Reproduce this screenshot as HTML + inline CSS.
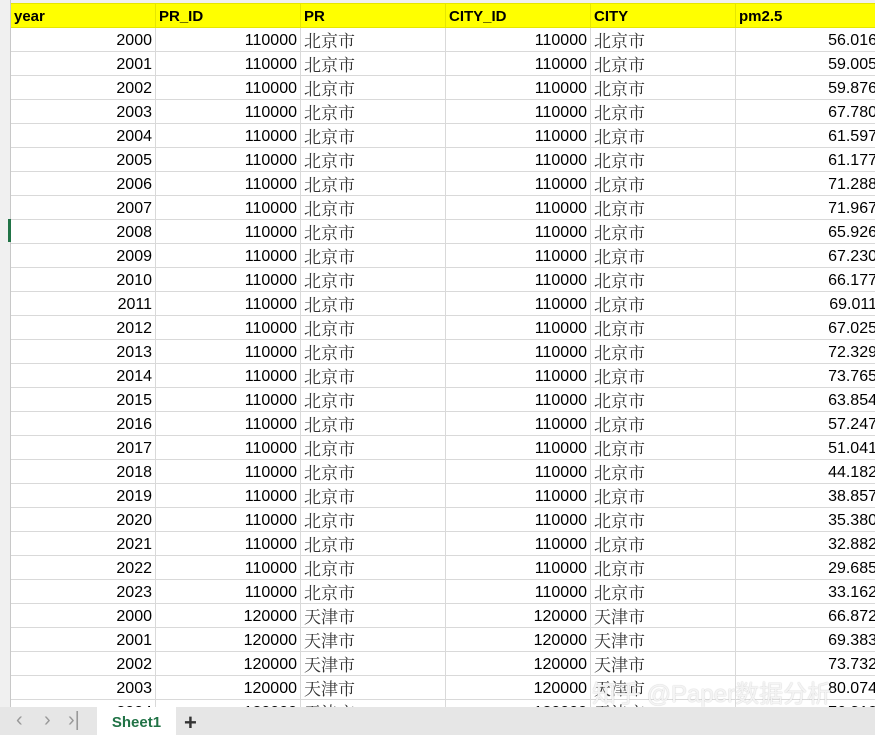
<!DOCTYPE html><html><head><meta charset="utf-8"><style>
body{margin:0;width:875px;height:735px;overflow:hidden;background:#fff;position:relative;font-family:"Liberation Sans",sans-serif}
table{position:absolute;left:10px;top:3px;border-collapse:collapse;table-layout:fixed;width:870px}
td{height:21px;border:1px solid #d9d9d9;padding:2px 3px 0 3px;font-size:16px;white-space:nowrap;overflow:hidden;line-height:21px;color:#000}
tr.h td{background:#ffff00;font-weight:bold;border-color:#e6e600;font-size:15px}
td.n{text-align:right}
td.c{font-family:"Noto Serif CJK SC","Liberation Serif",serif;font-size:17px;color:#333;height:23px;padding-top:0;line-height:23px}
.gut{position:absolute;left:0;top:0;width:10px;height:707px;background:#f0f0f0;border-right:1px solid #c8c8c8}
.top{position:absolute;left:0;top:0;width:875px;height:3px;background:#f0f0f0}
.sel{position:absolute;left:8px;top:219px;width:3px;height:23px;background:#217346}
.tabs{position:absolute;left:0;top:707px;width:875px;height:28px;background:#e6e6e6}
.tab{position:absolute;left:97px;top:0;width:79px;height:28px;background:#fff;color:#217346;font-weight:bold;font-size:15px;text-align:center;line-height:32px}
.nav{position:absolute;top:2px;color:#999;font-size:20px}
.wm{position:absolute;left:592px;top:674px;font-size:24px;color:rgba(255,255,255,.85);font-family:"Liberation Sans","Noto Sans CJK SC",sans-serif;text-shadow:0 0 1px #aaa;white-space:nowrap}
</style></head><body>
<div class="top"></div>
<table>
<colgroup><col style="width:145px"><col style="width:145px"><col style="width:145px"><col style="width:145px"><col style="width:145px"><col style="width:145px"></colgroup>
<tr class="h"><td>year</td><td>PR_ID</td><td>PR</td><td>CITY_ID</td><td>CITY</td><td>pm2.5</td></tr>
<tr><td class="n">2000</td><td class="n">110000</td><td class="c">北京市</td><td class="n">110000</td><td class="c">北京市</td><td class="n">56.016</td></tr>
<tr><td class="n">2001</td><td class="n">110000</td><td class="c">北京市</td><td class="n">110000</td><td class="c">北京市</td><td class="n">59.005</td></tr>
<tr><td class="n">2002</td><td class="n">110000</td><td class="c">北京市</td><td class="n">110000</td><td class="c">北京市</td><td class="n">59.876</td></tr>
<tr><td class="n">2003</td><td class="n">110000</td><td class="c">北京市</td><td class="n">110000</td><td class="c">北京市</td><td class="n">67.780</td></tr>
<tr><td class="n">2004</td><td class="n">110000</td><td class="c">北京市</td><td class="n">110000</td><td class="c">北京市</td><td class="n">61.597</td></tr>
<tr><td class="n">2005</td><td class="n">110000</td><td class="c">北京市</td><td class="n">110000</td><td class="c">北京市</td><td class="n">61.177</td></tr>
<tr><td class="n">2006</td><td class="n">110000</td><td class="c">北京市</td><td class="n">110000</td><td class="c">北京市</td><td class="n">71.288</td></tr>
<tr><td class="n">2007</td><td class="n">110000</td><td class="c">北京市</td><td class="n">110000</td><td class="c">北京市</td><td class="n">71.967</td></tr>
<tr><td class="n">2008</td><td class="n">110000</td><td class="c">北京市</td><td class="n">110000</td><td class="c">北京市</td><td class="n">65.926</td></tr>
<tr><td class="n">2009</td><td class="n">110000</td><td class="c">北京市</td><td class="n">110000</td><td class="c">北京市</td><td class="n">67.230</td></tr>
<tr><td class="n">2010</td><td class="n">110000</td><td class="c">北京市</td><td class="n">110000</td><td class="c">北京市</td><td class="n">66.177</td></tr>
<tr><td class="n">2011</td><td class="n">110000</td><td class="c">北京市</td><td class="n">110000</td><td class="c">北京市</td><td class="n">69.011</td></tr>
<tr><td class="n">2012</td><td class="n">110000</td><td class="c">北京市</td><td class="n">110000</td><td class="c">北京市</td><td class="n">67.025</td></tr>
<tr><td class="n">2013</td><td class="n">110000</td><td class="c">北京市</td><td class="n">110000</td><td class="c">北京市</td><td class="n">72.329</td></tr>
<tr><td class="n">2014</td><td class="n">110000</td><td class="c">北京市</td><td class="n">110000</td><td class="c">北京市</td><td class="n">73.765</td></tr>
<tr><td class="n">2015</td><td class="n">110000</td><td class="c">北京市</td><td class="n">110000</td><td class="c">北京市</td><td class="n">63.854</td></tr>
<tr><td class="n">2016</td><td class="n">110000</td><td class="c">北京市</td><td class="n">110000</td><td class="c">北京市</td><td class="n">57.247</td></tr>
<tr><td class="n">2017</td><td class="n">110000</td><td class="c">北京市</td><td class="n">110000</td><td class="c">北京市</td><td class="n">51.041</td></tr>
<tr><td class="n">2018</td><td class="n">110000</td><td class="c">北京市</td><td class="n">110000</td><td class="c">北京市</td><td class="n">44.182</td></tr>
<tr><td class="n">2019</td><td class="n">110000</td><td class="c">北京市</td><td class="n">110000</td><td class="c">北京市</td><td class="n">38.857</td></tr>
<tr><td class="n">2020</td><td class="n">110000</td><td class="c">北京市</td><td class="n">110000</td><td class="c">北京市</td><td class="n">35.380</td></tr>
<tr><td class="n">2021</td><td class="n">110000</td><td class="c">北京市</td><td class="n">110000</td><td class="c">北京市</td><td class="n">32.882</td></tr>
<tr><td class="n">2022</td><td class="n">110000</td><td class="c">北京市</td><td class="n">110000</td><td class="c">北京市</td><td class="n">29.685</td></tr>
<tr><td class="n">2023</td><td class="n">110000</td><td class="c">北京市</td><td class="n">110000</td><td class="c">北京市</td><td class="n">33.162</td></tr>
<tr><td class="n">2000</td><td class="n">120000</td><td class="c">天津市</td><td class="n">120000</td><td class="c">天津市</td><td class="n">66.872</td></tr>
<tr><td class="n">2001</td><td class="n">120000</td><td class="c">天津市</td><td class="n">120000</td><td class="c">天津市</td><td class="n">69.383</td></tr>
<tr><td class="n">2002</td><td class="n">120000</td><td class="c">天津市</td><td class="n">120000</td><td class="c">天津市</td><td class="n">73.732</td></tr>
<tr><td class="n">2003</td><td class="n">120000</td><td class="c">天津市</td><td class="n">120000</td><td class="c">天津市</td><td class="n">80.074</td></tr>
<tr><td class="n">2004</td><td class="n">120000</td><td class="c">天津市</td><td class="n">120000</td><td class="c">天津市</td><td class="n">76.312</td></tr>
</table>
<div class="gut"></div>
<div class="sel"></div>
<div class="wm">知乎 @Paper数据分析</div>
<div class="tabs">
<span class="nav" style="left:16px">&#8249;</span>
<span class="nav" style="left:44px">&#8250;</span>
<span class="nav" style="left:68px">&#8250;|</span>
<div class="tab">Sheet1</div>
<span style="position:absolute;left:184px;top:3px;font-size:22px;font-weight:bold;color:#333">+</span>
</div>
</body></html>
